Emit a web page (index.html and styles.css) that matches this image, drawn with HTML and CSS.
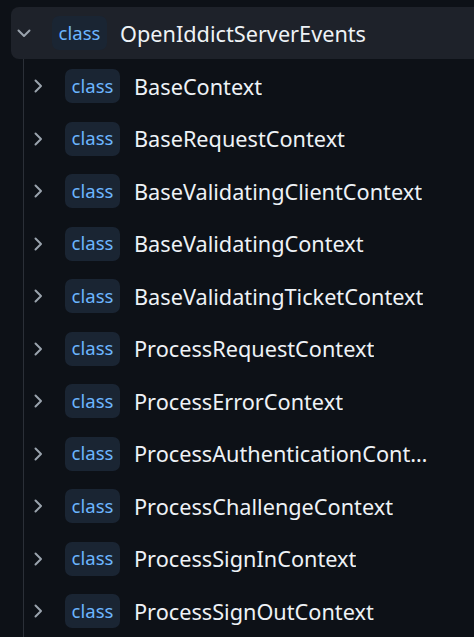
FILE: index.html
```html
<!DOCTYPE html>
<html>
<head>
<meta charset="utf-8">
<link rel="stylesheet" href="styles.css">
</head>
<body>
<div class="tree">
  <div class="row root">
    <span class="chev down"><svg width="14" height="9" viewBox="0 0 14 9"><path d="M1.5 1.5 L7 7 L12.5 1.5" fill="none" stroke="#9aa3ad" stroke-width="2" stroke-linecap="round" stroke-linejoin="round"/></svg></span>
    <span class="badge">class</span>
    <span class="name">OpenIddictServerEvents</span>
  </div>
  <div class="children">
    <div class="row"><span class="chev right"><svg width="9" height="14" viewBox="0 0 9 14"><path d="M1.5 1.5 L7 7 L1.5 12.5" fill="none" stroke="#9aa3ad" stroke-width="2" stroke-linecap="round" stroke-linejoin="round"/></svg></span><span class="badge">class</span><span class="name">BaseContext</span></div>
    <div class="row"><span class="chev right"><svg width="9" height="14" viewBox="0 0 9 14"><path d="M1.5 1.5 L7 7 L1.5 12.5" fill="none" stroke="#9aa3ad" stroke-width="2" stroke-linecap="round" stroke-linejoin="round"/></svg></span><span class="badge">class</span><span class="name">BaseRequestContext</span></div>
    <div class="row"><span class="chev right"><svg width="9" height="14" viewBox="0 0 9 14"><path d="M1.5 1.5 L7 7 L1.5 12.5" fill="none" stroke="#9aa3ad" stroke-width="2" stroke-linecap="round" stroke-linejoin="round"/></svg></span><span class="badge">class</span><span class="name">BaseValidatingClientContext</span></div>
    <div class="row"><span class="chev right"><svg width="9" height="14" viewBox="0 0 9 14"><path d="M1.5 1.5 L7 7 L1.5 12.5" fill="none" stroke="#9aa3ad" stroke-width="2" stroke-linecap="round" stroke-linejoin="round"/></svg></span><span class="badge">class</span><span class="name">BaseValidatingContext</span></div>
    <div class="row"><span class="chev right"><svg width="9" height="14" viewBox="0 0 9 14"><path d="M1.5 1.5 L7 7 L1.5 12.5" fill="none" stroke="#9aa3ad" stroke-width="2" stroke-linecap="round" stroke-linejoin="round"/></svg></span><span class="badge">class</span><span class="name">BaseValidatingTicketContext</span></div>
    <div class="row"><span class="chev right"><svg width="9" height="14" viewBox="0 0 9 14"><path d="M1.5 1.5 L7 7 L1.5 12.5" fill="none" stroke="#9aa3ad" stroke-width="2" stroke-linecap="round" stroke-linejoin="round"/></svg></span><span class="badge">class</span><span class="name">ProcessRequestContext</span></div>
    <div class="row"><span class="chev right"><svg width="9" height="14" viewBox="0 0 9 14"><path d="M1.5 1.5 L7 7 L1.5 12.5" fill="none" stroke="#9aa3ad" stroke-width="2" stroke-linecap="round" stroke-linejoin="round"/></svg></span><span class="badge">class</span><span class="name">ProcessErrorContext</span></div>
    <div class="row"><span class="chev right"><svg width="9" height="14" viewBox="0 0 9 14"><path d="M1.5 1.5 L7 7 L1.5 12.5" fill="none" stroke="#9aa3ad" stroke-width="2" stroke-linecap="round" stroke-linejoin="round"/></svg></span><span class="badge">class</span><span class="name">ProcessAuthenticationContext</span></div>
    <div class="row"><span class="chev right"><svg width="9" height="14" viewBox="0 0 9 14"><path d="M1.5 1.5 L7 7 L1.5 12.5" fill="none" stroke="#9aa3ad" stroke-width="2" stroke-linecap="round" stroke-linejoin="round"/></svg></span><span class="badge">class</span><span class="name">ProcessChallengeContext</span></div>
    <div class="row"><span class="chev right"><svg width="9" height="14" viewBox="0 0 9 14"><path d="M1.5 1.5 L7 7 L1.5 12.5" fill="none" stroke="#9aa3ad" stroke-width="2" stroke-linecap="round" stroke-linejoin="round"/></svg></span><span class="badge">class</span><span class="name">ProcessSignInContext</span></div>
    <div class="row"><span class="chev right"><svg width="9" height="14" viewBox="0 0 9 14"><path d="M1.5 1.5 L7 7 L1.5 12.5" fill="none" stroke="#9aa3ad" stroke-width="2" stroke-linecap="round" stroke-linejoin="round"/></svg></span><span class="badge">class</span><span class="name">ProcessSignOutContext</span></div>
  </div>
</div>
</body>
</html>
```
FILE: styles.css
```css
html, body {
  margin: 0;
  padding: 0;
  background: #0d1117;
  height: 100%;
  overflow: hidden;
}
.tree {
  padding: 7px 0 0 11px;
  font-family: "Noto Sans", "Open Sans", sans-serif;
  color: #eef2f6;
}
.row {
  display: flex;
  align-items: center;
  height: 52.5px;
  white-space: nowrap;
}
.row.root {
  height: 52px;
  background: #1e222a;
  border-radius: 8px 0 0 8px;
  padding-left: 6px;
}
.children {
  margin-left: 12px;
  border-left: 1px solid #2b3038;
  padding-left: 9px;
  padding-top: 1px;
}
.chev {
  display: flex;
  align-items: center;
  justify-content: center;
}
.chev.down {
  width: 14px;
  margin-right: 21px;
}
.chev.right {
  width: 11px;
  margin-right: 21px;
}
.badge {
  display: inline-flex;
  align-items: center;
  justify-content: center;
  width: 55px;
  height: 34px;
  border-radius: 7px;
  background: #1a2533;
  color: #6cb6ff;
  font-size: 18.5px;
  box-sizing: border-box;
  margin-right: 14px;
  padding-bottom: 2px;
}
.root .badge {
  margin-right: 13px;
}
.name {
  font-size: 21.7px;
  overflow: hidden;
  text-overflow: ellipsis;
  max-width: 298px;
}
```
